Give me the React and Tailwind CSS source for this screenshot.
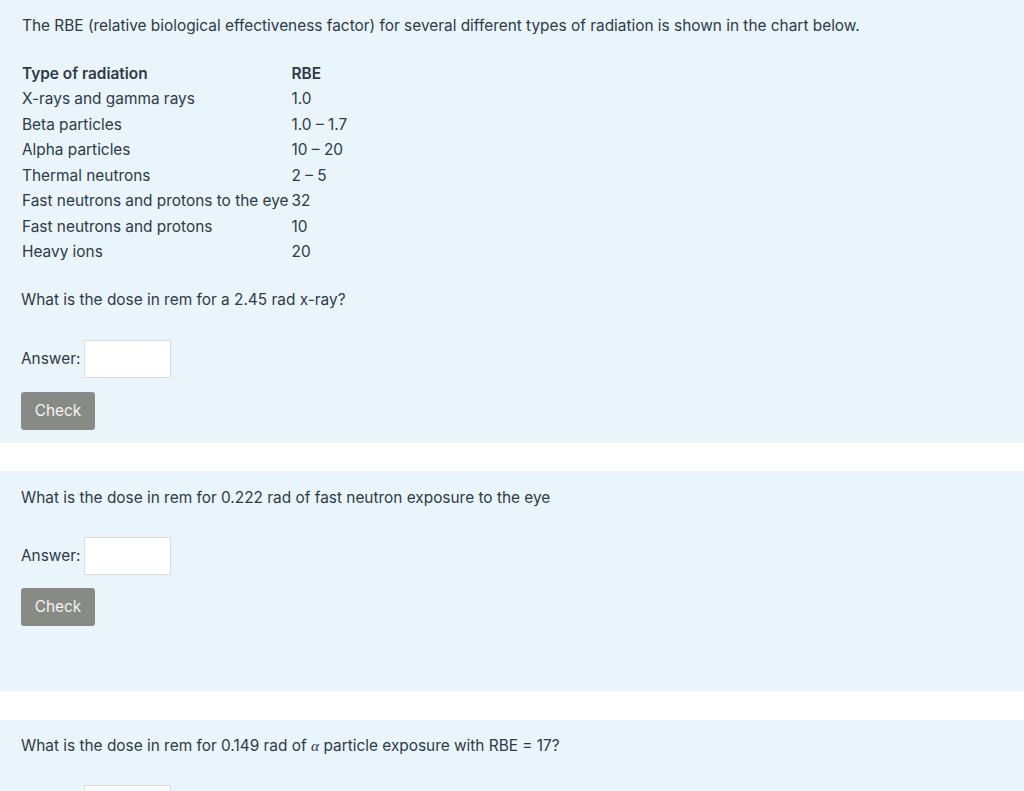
import { useState } from "react";

const rows = [
  ["X-rays and gamma rays", "1.0"],
  ["Beta particles", "1.0 – 1.7"],
  ["Alpha particles", "10 – 20"],
  ["Thermal neutrons", "2 – 5"],
  ["Fast neutrons and protons to the eye", "32"],
  ["Fast neutrons and protons", "10"],
  ["Heavy ions", "20"],
];

function AnswerBlock({ tight }) {
  const [value, setValue] = useState("");
  return (
    <>
      <div className={`${tight ? "mt-[28px]" : "mt-[29px]"} flex items-center h-[38px]`}>
        <span>Answer:</span>
        <input
          value={value}
          onChange={(e) => setValue(e.target.value)}
          className="ml-[4px] w-[87px] h-[38px] bg-white border border-[#dcdcdc] outline-none px-2"
        />
      </div>
      <button
        className={`${tight ? "mt-[13px]" : "mt-[14px]"} w-[74px] h-[38px] rounded-[3px] bg-[#888a85] text-[#f4f4f4] flex items-center justify-center`}
      >
        Check
      </button>
    </>
  );
}

export default function App() {
  return (
    <div className="min-h-screen bg-white text-[15.4px] text-[#2d3b45] font-['Inter','Liberation_Sans',sans-serif] leading-[22px]">
      {/* question 1 */}
      <div className="bg-[#e9f4fb] h-[443px] pt-[15px] pl-[22px]">
        <p>
          The RBE (relative biological effectiveness factor) for several different types of radiation is shown in the chart below.
        </p>
        <table className="mt-[24px] border-collapse">
          <thead>
            <tr className="h-[25.5px]">
              <th className="text-left font-semibold pr-[3px]">Type of radiation</th>
              <th className="text-left font-semibold">RBE</th>
            </tr>
          </thead>
          <tbody>
            {rows.map(([type, rbe]) => (
              <tr key={type} className="h-[25.5px]">
                <td className="pr-[3px]">{type}</td>
                <td>{rbe}</td>
              </tr>
            ))}
          </tbody>
        </table>
        <p className="mt-[24px] -ml-[1px]">What is the dose in rem for a 2.45 rad x-ray?</p>
        <div className="-ml-[1px]">
          <AnswerBlock />
        </div>
      </div>

      {/* question 2 */}
      <div className="mt-[28px] bg-[#e9f4fb] h-[220px] pt-[16px] pl-[21px]">
        <p>What is the dose in rem for 0.222 rad of fast neutron exposure to the eye</p>
        <AnswerBlock tight />
      </div>

      {/* question 3 */}
      <div className="mt-[29px] bg-[#e9f4fb] h-[220px] pt-[15px] pl-[21px]">
        <p>
          What is the dose in rem for 0.149 rad of{" "}
          <span className="font-['Liberation_Serif',serif] italic">α</span> particle exposure with RBE = 17?
        </p>
        <AnswerBlock tight />
      </div>
    </div>
  );
}
